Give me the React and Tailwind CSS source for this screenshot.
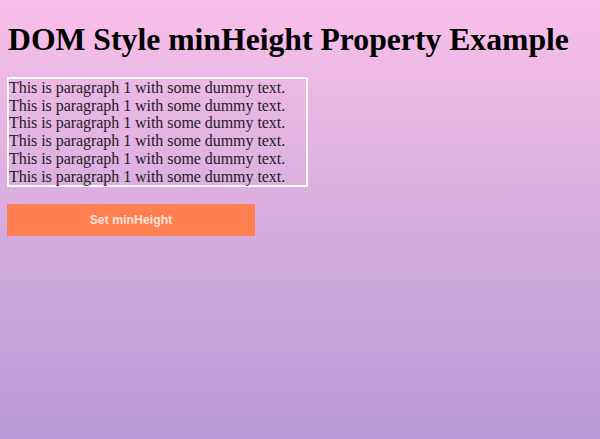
export default function App() {
  const lines = Array.from({ length: 6 }, (_, i) => i);
  return (
    <div className="min-h-[439px] w-full bg-gradient-to-b from-[#f9bfe9] to-[#b79ad6] px-2 pt-[21px] font-['Liberation_Serif',serif] text-black">
      <h1 className="text-[31.7px] font-bold leading-[37px]">DOM Style minHeight Property Example</h1>
      <div className="mt-[19px] w-[301px] border-2 border-white -ml-px">
        {lines.map((i) => (
          <p key={i} className="text-[16px] leading-[17.7px] tracking-[-0.05px] text-[#222]">
            This is paragraph 1 with some dummy text.
          </p>
        ))}
      </div>
      <button className="mt-[17px] -ml-px h-8 w-[248px] bg-[#ff7f50] font-['Liberation_Sans',sans-serif] text-[12.3px] font-bold text-[#fbe3dc]">
        Set minHeight
      </button>
    </div>
  );
}
